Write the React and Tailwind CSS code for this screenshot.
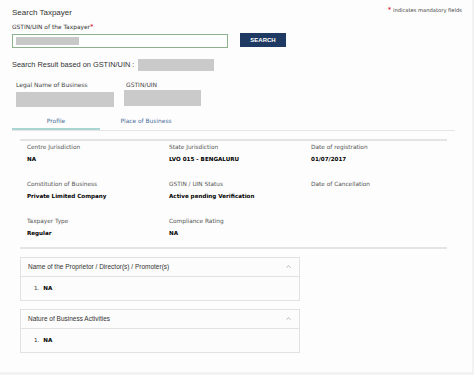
const Field = ({ label, value }) => (
  <div className="flex flex-col">
    <div className="h-[8px] text-[5.8px] leading-[8px] text-[#555] font-['DejaVu_Sans',sans-serif]">{label}</div>
    <div className="mt-[4px] h-[8px] text-[5.6px] leading-[8px] font-bold text-black font-['DejaVu_Sans',sans-serif]">{value}</div>
  </div>
);

const Accordion = ({ title }) => (
  <div className="w-[280px] border border-[#e2e2e2] bg-[#fcfcfc]">
    <div className="flex h-[19px] items-center justify-between border-b border-[#e2e2e2] pl-[7px] pr-[8px]">
      <span className="text-[6.5px] text-[#333] font-['Liberation_Sans',sans-serif]">{title}</span>
      <svg width="5" height="3" viewBox="0 0 5 3" className="mt-[-1px]">
        <path d="M0.5 2.5 L2.5 0.7 L4.5 2.5" fill="none" stroke="#999" strokeWidth="0.7" />
      </svg>
    </div>
    <div className="flex h-[23px] items-center pl-[13px] text-[5.6px] font-['DejaVu_Sans',sans-serif] text-[#333]">
      <span className="mr-[4px]">1.</span>
      <span className="font-bold text-black">NA</span>
    </div>
  </div>
);

export default function App() {
  return (
    <div className="h-[375px] w-[474px] overflow-hidden bg-[#f2f2f2]">
      <div className="h-[372px] w-[472px] bg-[#fdfdfd] px-[12px] pt-[8px]">
        <div className="flex items-start justify-between">
          <div className="text-[8px] leading-[10px] text-[#333] font-['Liberation_Sans',sans-serif]">Search Taxpayer</div>
          <div className="mr-[-2px] mt-[-2px] text-[5.2px] leading-[8px] text-[#444] font-['DejaVu_Sans',sans-serif]">
            <span className="text-[#d0021b] text-[7px]">*</span> indicates mandatory fields
          </div>
        </div>
        <div className="mt-[5px] h-[8px] text-[5.9px] leading-[8px] text-[#333] font-['DejaVu_Sans',sans-serif]">
          GSTIN/UIN of the Taxpayer<span className="text-[#d0021b] text-[7px] leading-[5px]">*</span>
        </div>
        <div className="mt-[2px] flex items-start gap-[12px]">
          <div className="mt-[1px] flex h-[14px] w-[216px] items-center border border-[#8db08d] bg-white px-[3px]">
            <div className="h-[8px] w-[63px] bg-[#c8c8c8]" />
          </div>
          <button className="flex h-[14px] w-[46px] items-center justify-center bg-[#1e3a62] text-[6px] font-bold text-white font-['Liberation_Sans',sans-serif]">
            SEARCH
          </button>
        </div>
        <div className="mt-[11px] flex items-center">
          <span className="text-[7.4px] leading-[12px] text-[#333] font-['Liberation_Sans',sans-serif]">Search Result based on GSTIN/UIN :</span>
          <div className="ml-[4px] h-[12px] w-[76px] bg-[#cacaca]" />
        </div>
        <div className="mt-[10px] flex pl-[4px]">
          <div className="w-[108px]">
            <div className="h-[8px] text-[6px] leading-[8px] text-[#444] font-['DejaVu_Sans',sans-serif]">Legal Name of Business</div>
            <div className="mt-[3px] h-[15px] w-[98px] bg-[#cacaca]" />
          </div>
          <div>
            <div className="ml-[2px] h-[8px] text-[6px] leading-[8px] text-[#444] font-['DejaVu_Sans',sans-serif]">GSTIN/UIN</div>
            <div className="mt-[1px] h-[16px] w-[77px] bg-[#cacaca]" />
          </div>
        </div>
        <div className="mt-[7px] flex w-[443px] border-b border-[#e6e6e6]">
          <div className="mb-[-1px] flex h-[16px] w-[88px] items-center justify-center border-b-2 border-[#a9d6d2] text-[5.9px] text-[#4a6f9c] font-['DejaVu_Sans',sans-serif]">
            Profile
          </div>
          <div className="flex h-[16px] w-[92px] items-center justify-center pb-[1px] text-[5.9px] text-[#4a6f9c] font-['DejaVu_Sans',sans-serif]">
            Place of Business
          </div>
        </div>
        <div className="ml-[8px] mt-[8px] h-[2px] w-[427px] bg-[#e4e4e4]" />
        <div className="ml-[15px] mt-[2px] grid w-[426px] grid-cols-3 gap-y-[17px]">
          <Field label="Centre Jurisdiction" value="NA" />
          <Field label="State Jurisdiction" value="LVO 015 - BENGALURU" />
          <Field label="Date of registration" value="01/07/2017" />
          <Field label="Constitution of Business" value="Private Limited Company" />
          <Field label="GSTIN / UIN Status" value="Active pending Verification" />
          <Field label="Date of Cancellation" value="" />
          <Field label="Taxpayer Type" value="Regular" />
          <Field label="Compliance Rating" value="NA" />
        </div>
        <div className="ml-[8px] mt-[10px] h-[2px] w-[427px] bg-[#e4e4e4]" />
        <div className="ml-[8px] mt-[8px] flex flex-col gap-[8px]">
          <Accordion title="Name of the Proprietor / Director(s) / Promoter(s)" />
          <Accordion title="Nature of Business Activities" />
        </div>
      </div>
    </div>
  );
}
